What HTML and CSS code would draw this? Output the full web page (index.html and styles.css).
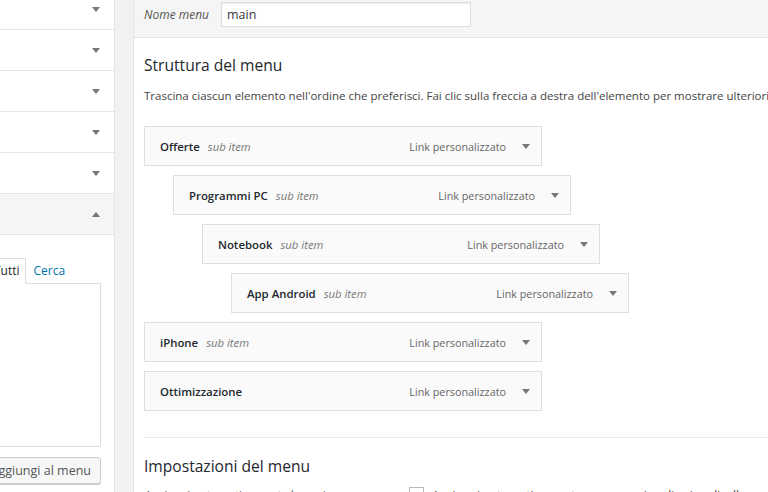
FILE: index.html
```html
<!DOCTYPE html>
<html lang="it">
<head>
<meta charset="utf-8">
<title>Menu</title>
<link rel="stylesheet" href="styles.css">
</head>
<body>
<div class="page">
  <aside class="side">
    <div class="side-inner">
      <div class="acc"><span class="arrow-down"></span></div>
      <div class="acc"><span class="arrow-down"></span></div>
      <div class="acc"><span class="arrow-down"></span></div>
      <div class="acc"><span class="arrow-down"></span></div>
      <div class="acc"><span class="arrow-down"></span></div>
      <div class="acc open"><span class="arrow-up"></span></div>
      <div class="acc-body">
        <div class="tabs">
          <span class="tab active">Tutti</span>
          <a class="tab-link">Cerca</a>
        </div>
        <div class="list-box"></div>
        <div class="btn-row"><button class="btn">Aggiungi al menu</button></div>
      </div>
    </div>
  </aside>
  <main class="main">
    <div class="header">
      <label class="name-label">Nome menu</label>
      <input class="name-input" type="text" value="main">
    </div>
    <div class="content">
      <h3 class="title">Struttura del menu</h3>
      <p class="desc">Trascina ciascun elemento nell'ordine che preferisci. Fai clic sulla freccia a destra dell'elemento per mostrare ulteriori opzioni di configurazione.</p>
      <ul class="menu">
        <li class="item"><span class="item-title">Offerte</span><span class="sub">sub item</span><span class="type">Link personalizzato</span><span class="arrow-down"></span></li>
        <li class="item depth-1"><span class="item-title">Programmi PC</span><span class="sub">sub item</span><span class="type">Link personalizzato</span><span class="arrow-down"></span></li>
        <li class="item depth-2"><span class="item-title">Notebook</span><span class="sub">sub item</span><span class="type">Link personalizzato</span><span class="arrow-down"></span></li>
        <li class="item depth-3"><span class="item-title">App Android</span><span class="sub">sub item</span><span class="type">Link personalizzato</span><span class="arrow-down"></span></li>
        <li class="item"><span class="item-title">iPhone</span><span class="sub">sub item</span><span class="type">Link personalizzato</span><span class="arrow-down"></span></li>
        <li class="item"><span class="item-title">Ottimizzazione</span><span class="type">Link personalizzato</span><span class="arrow-down"></span></li>
      </ul>
      <div class="sep"></div>
      <h3 class="title">Impostazioni del menu</h3>
      <div class="settings-row">
        <span class="howto">Aggiungi automaticamente le pagine</span>
        <span class="check"></span>
        <span class="check-label">Aggiungi automaticamente nuove pagine di primo livello a questo menu</span>
      </div>
    </div>
  </main>
</div>
</body>
</html>
```

FILE: styles.css
```css
* { box-sizing: border-box; }
html, body { margin: 0; padding: 0; }
body {
  background: #f1f1f1;
  font-family: "Open Sans", "Noto Sans", sans-serif;
  color: #23282d;
  overflow: hidden;
  width: 768px;
  height: 492px;
}
.page {
  display: flex;
  gap: 18px;
  width: 900px;
  height: 492px;
}

/* sidebar */
.side {
  width: 115px;
  flex: none;
  overflow: hidden;
  background: #fff;
  border-right: 1px solid #e5e5e5;
}
.side-inner {
  width: 180px;
  margin-left: -66px;
  margin-top: -11px;
}
.acc {
  height: 41px;
  border-bottom: 1px solid #e5e5e5;
  display: flex;
  align-items: center;
  justify-content: flex-end;
  padding-right: 14px;
  background: #fff;
}
.acc.open { background: #f5f5f5; }
.arrow-down {
  width: 0; height: 0;
  border-left: 4px solid transparent;
  border-right: 4px solid transparent;
  border-top: 5px solid #777;
}
.arrow-up {
  width: 0; height: 0;
  border-left: 4px solid transparent;
  border-right: 4px solid transparent;
  border-bottom: 5px solid #777;
}
.acc-body {
  padding: 23px 13px 0 0;
}
.tabs {
  display: flex;
  align-items: flex-end;
  height: 25px;
  padding-left: 54px;
  font-size: 12px;
}
.tab {
  height: 26px;
  line-height: 24px;
  padding: 0 5px;
  border: 1px solid #ddd;
  border-bottom: 1px solid #fff;
  background: #fff;
  margin-bottom: -1px;
  position: relative;
  z-index: 1;
  color: #23282d;
}
.tab-link {
  margin-left: 8px;
  line-height: 24px;
  color: #0073aa;
}
.list-box {
  height: 164px;
  border: 1px solid #ddd;
  background: #fff;
}
.btn-row {
  display: flex;
  justify-content: flex-end;
  margin-top: 10px;
}
.btn {
  height: 27px;
  padding: 0 9px;
  border: 1px solid #ccc;
  background: #f7f7f7;
  border-radius: 3px;
  box-shadow: 0 1px 0 #ccc;
  font-family: inherit;
  font-size: 12.5px;
  color: #555;
  white-space: nowrap;
}

/* main */
.main {
  flex: none;
  width: 700px;
  background: #fff;
  border-left: 1px solid #e5e5e5;
}
.header {
  height: 38px;
  background: #f5f5f5;
  border-bottom: 1px solid #e5e5e5;
  display: flex;
  align-items: center;
  padding: 0 0 9px 10px;
}
.name-label {
  width: 77px;
  font-style: italic;
  font-size: 12px;
  color: #555;
}
.name-input {
  width: 250px;
  height: 25px;
  border: 1px solid #ddd;
  box-shadow: inset 0 1px 2px rgba(0,0,0,.07);
  padding: 0 5px;
  font-family: inherit;
  font-size: 12.5px;
  color: #32373c;
  background: #fff;
}
.content {
  padding: 0 10px;
}
.title {
  margin: 17px 0 0;
  font-size: 15.6px;
  line-height: 20px;
  font-weight: 400;
  color: #23282d;
  white-space: nowrap;
}
.desc {
  margin: 13px 0 0;
  font-size: 11.5px;
  line-height: 16px;
  color: #444;
  white-space: nowrap;
}
.menu {
  list-style: none;
  margin: 22px 0 0;
  padding: 0;
}
.item {
  width: 398px;
  height: 40px;
  margin-bottom: 9px;
  border: 1px solid #dfdfdf;
  background: #fafafa;
  display: flex;
  align-items: center;
  padding: 0 11px 0 15px;
  font-size: 11px;
}
.item:last-child { margin-bottom: 0; }
.depth-1 { margin-left: 29px; }
.depth-2 { margin-left: 58px; }
.depth-3 { margin-left: 87px; }
.item-title {
  font-weight: 600;
  font-size: 11.4px;
  color: #23282d;
}
.sub {
  margin-left: 8px;
  font-style: italic;
  font-size: 11.3px;
  color: #777;
}
.type {
  margin-left: auto;
  margin-right: 16px;
  color: #666;
  font-size: 10.8px;
}
.sep {
  margin-top: 26px;
  border-top: 1px solid #eaeaea;
}
.sep + .title { margin-top: 18px; }
.settings-row {
  display: flex;
  align-items: flex-start;
  margin-top: 11px;
  font-size: 12px;
  white-space: nowrap;
}
.howto {
  flex: none;
  width: 265px;
  font-style: italic;
  color: #666;
}
.check {
  width: 15px;
  height: 15px;
  margin-top: 0;
  border: 1px solid #b4b9be;
  background: #fff;
  flex: none;
}
.check-label {
  margin-left: 8px;
  color: #444;
}
```
